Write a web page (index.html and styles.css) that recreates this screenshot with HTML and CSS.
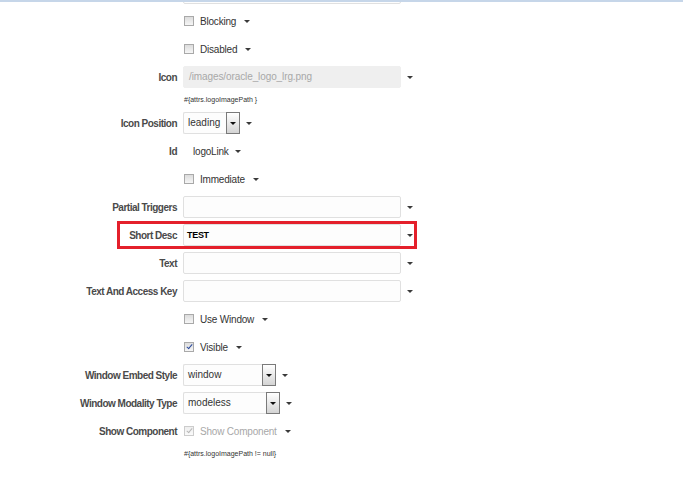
FILE: index.html
```html
<!DOCTYPE html>
<html lang="en">

<head>
    <meta charset="UTF-8">
    <meta name="viewport" content="width=device-width, initial-scale=1.0">
    <title>Property Inspector</title>
    <link rel="stylesheet" href="styles.css">
</head>

<body>
    <div class="panel">
        <div class="form">
            <!-- row cut off by the top of the panel -->
            <div class="row">
                <span class="label"></span>
                <span class="field"></span><span class="arrow"></span>
            </div>

            <div class="row">
                <span class="label"></span>
                <span class="check"></span><span class="text">Blocking</span><span class="arrow wide"></span>
            </div>

            <div class="row">
                <span class="label"></span>
                <span class="check"></span><span class="text">Disabled</span><span class="arrow wide"></span>
            </div>

            <div class="row">
                <span class="label">Icon</span>
                <span class="field disabled">/images/oracle_logo_lrg.png</span><span class="arrow"></span>
            </div>
            <div class="hint">#{attrs.logoImagePath }</div>

            <div class="row">
                <span class="label">Icon Position</span>
                <span class="select"><span class="choice leading">leading</span><span class="drop"></span></span><span class="arrow"></span>
            </div>

            <div class="row">
                <span class="label">Id</span>
                <span class="text plain">logoLink</span><span class="arrow"></span>
            </div>

            <div class="row">
                <span class="label"></span>
                <span class="check"></span><span class="text">Immediate</span><span class="arrow wide"></span>
            </div>

            <div class="row">
                <span class="label">Partial Triggers</span>
                <span class="field"></span><span class="arrow"></span>
            </div>

            <div class="row flagged">
                <span class="label">Short Desc</span>
                <span class="field strong">TEST</span><span class="arrow"></span>
            </div>

            <div class="row">
                <span class="label">Text</span>
                <span class="field"></span><span class="arrow"></span>
            </div>

            <div class="row">
                <span class="label">Text And Access Key</span>
                <span class="field"></span><span class="arrow"></span>
            </div>

            <div class="row">
                <span class="label"></span>
                <span class="check"></span><span class="text">Use Window</span><span class="arrow wide"></span>
            </div>

            <div class="row">
                <span class="label"></span>
                <span class="check checked"></span><span class="text">Visible</span><span class="arrow wide"></span>
            </div>

            <div class="row">
                <span class="label">Window Embed Style</span>
                <span class="select"><span class="choice embed">window</span><span class="drop"></span></span><span class="arrow"></span>
            </div>

            <div class="row">
                <span class="label">Window Modality Type</span>
                <span class="select"><span class="choice modality">modeless</span><span class="drop"></span></span><span class="arrow"></span>
            </div>

            <div class="row">
                <span class="label">Show Component</span>
                <span class="check checked off"></span><span class="text muted">Show Component</span><span class="arrow wide"></span>
            </div>
            <div class="hint">#{attrs.logoImagePath != null}</div>
        </div>
    </div>
</body>

</html>
```

FILE: styles.css
```css
body {
    margin: 0;
    background-color: #ffffff;
    font-family: "Liberation Sans", Arial, sans-serif;
    color: #333333;
}

.panel {
    border-top: 2px solid #c6d6e9;
    overflow: hidden;
}

.form {
    margin-top: -23px;
}

.row {
    display: flex;
    align-items: center;
    height: 28px;
    position: relative;
}

.label {
    width: 177px;
    margin-right: 6px;
    text-align: right;
    font-size: 10px;
    font-weight: bold;
    letter-spacing: -0.5px;
    color: #4a4a4a;
    flex-shrink: 0;
}

.hint {
    height: 18px;
    line-height: 18px;
    padding-left: 184px;
    font-size: 7px;
    color: #333333;
}

.field {
    box-sizing: border-box;
    width: 218px;
    height: 22px;
    line-height: 20px;
    padding: 0 5px;
    border: 1px solid #e0e0e0;
    border-radius: 2px;
    background-color: #fdfdfd;
    font-size: 10px;
    color: #333333;
}

.field.disabled {
    background-color: #efefef;
    border-color: #efefef;
    color: #a8a8a8;
    letter-spacing: -0.1px;
}

.field.strong {
    padding-left: 3px;
    font-size: 9px;
    font-weight: bold;
    letter-spacing: -0.3px;
    color: #000000;
}

.arrow {
    width: 0;
    height: 0;
    margin-left: 6px;
    border-left: 3px solid transparent;
    border-right: 3px solid transparent;
    border-top: 3px solid #3a3a3a;
}

.arrow.wide {
    margin-left: 8px;
}

.check {
    box-sizing: border-box;
    width: 10px;
    height: 10px;
    margin-left: 1px;
    border: 1px solid #a9a9a9;
    background: linear-gradient(#dcdcdc, #f6f6f6);
    position: relative;
}

.check.checked::after {
    content: "";
    position: absolute;
    left: 3px;
    top: 0px;
    width: 2px;
    height: 5px;
    border-right: 1.5px solid #2b4a9c;
    border-bottom: 1.5px solid #2b4a9c;
    transform: rotate(40deg);
}

.check.off {
    border-color: #cccccc;
    background: linear-gradient(#eeeeee, #fafafa);
}

.check.off::after {
    border-color: #b8b8b8;
}

.text {
    margin-left: 6px;
    font-size: 10px;
    letter-spacing: -0.2px;
    color: #333333;
}

.text.plain {
    margin-left: 10px;
}

.text.muted {
    color: #a8a8a8;
}

.select {
    display: flex;
    height: 22px;
}

.choice {
    box-sizing: border-box;
    height: 22px;
    line-height: 20px;
    padding: 0 4px;
    border: 1px solid #e0e0e0;
    border-right: none;
    border-radius: 2px 0 0 2px;
    background-color: #fdfdfd;
    font-size: 10px;
    color: #333333;
}

.choice.leading {
    width: 43px;
}

.choice.embed {
    width: 79px;
}

.choice.modality {
    width: 83px;
}

.drop {
    box-sizing: border-box;
    width: 14px;
    height: 22px;
    border: 1px solid #7a7a7a;
    background: linear-gradient(#ffffff, #d4d4d4);
    display: flex;
    align-items: center;
    justify-content: center;
}

.drop::after {
    content: "";
    border-left: 3px solid transparent;
    border-right: 3px solid transparent;
    border-top: 3px solid #111111;
}

.flagged::after {
    content: "";
    position: absolute;
    left: 117px;
    top: 0;
    width: 300px;
    height: 28px;
    box-sizing: border-box;
    border: 3px solid #e4202b;
}
```
